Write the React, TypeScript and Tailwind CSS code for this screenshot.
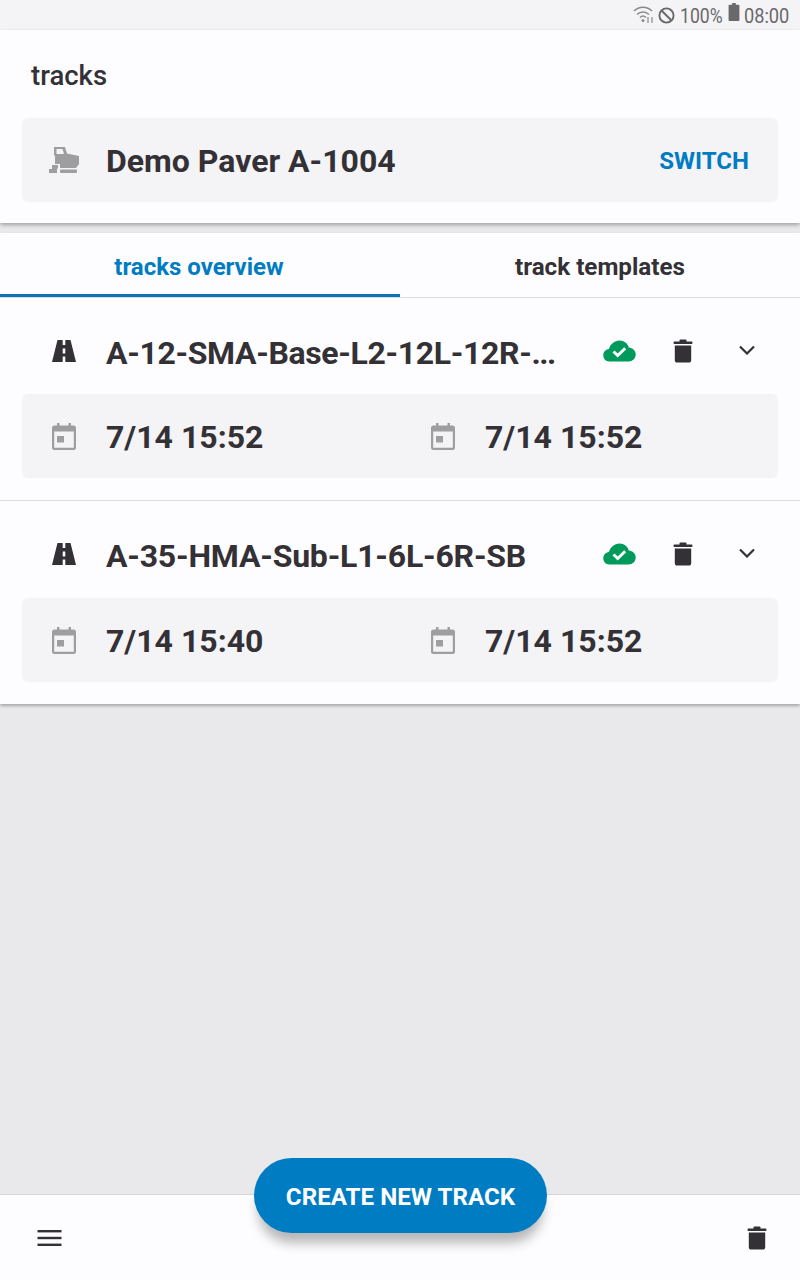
const font = { fontFamily: 'Roboto, sans-serif' };

function Trash({ className }: { className: string }) {
  return (
    <svg viewBox="0 0 20 24" className={className} fill="#333135">
      <rect x="0.5" y="2.5" width="19" height="2.6" rx="1" />
      <rect x="6.5" y="0.5" width="7" height="3" rx="1" />
      <path d="M1.8 6.5h16.4v14.5a2.6 2.6 0 0 1-2.6 2.6H4.4a2.6 2.6 0 0 1-2.6-2.6z" />
    </svg>
  );
}

function Calendar() {
  return (
    <svg viewBox="0 0 24 27" className="w-[24px] h-[27px] shrink-0" fill="#9e9da0">
      <path fillRule="evenodd" d="M5 0h2.500v2.500h9V0H19v2.500h2.500A2.500 2.500 0 0 1 24 5v19.500a2.500 2.500 0 0 1-2.500 2.500h-19A2.500 2.500 0 0 1 0 24.500V5a2.500 2.500 0 0 1 2.500-2.500H5zM2.200 8.500v16.300h19.600V8.500z" />
      <rect x="5" y="13" width="7" height="6.500" />
    </svg>
  );
}

function Road() {
  return (
    <svg viewBox="0 0 24 22" className="w-[24px] h-[22px] shrink-0" fill="#333135">
      <path fillRule="evenodd" d="M5.500 0h5.200v5h2.600V0h5.200L24 22H13.300v-5.500h-2.600V22H0zM10.700 8.500v5h2.600v-5z" />
    </svg>
  );
}

function Cloud() {
  return (
    <svg viewBox="0 0 33 22" className="w-[33px] h-[22px] shrink-0">
      <path fill="#009a5b" d="M16.500 0.500c4.600 0 8.300 3 9.300 7.100 3.900.2 6.900 3.200 6.900 6.900 0 3.900-3.200 7-7 7H6.300C2.900 21.500.300 18.700.300 15.300c0-3.200 2.400-5.800 5.600-6.200C7.400 4 11.500.500 16.500.500z" />
      <path d="M10.500 11.500l4.200 4 7.500-7.300" fill="none" stroke="#ffffff" strokeWidth="3" />
    </svg>
  );
}

function Chevron() {
  return (
    <svg viewBox="0 0 16 10" className="w-[16px] h-[10px]" fill="none" stroke="#333135" strokeWidth="2.200">
      <path d="M1 1.500l7 7 7-7" />
    </svg>
  );
}

function Paver() {
  return (
    <svg viewBox="0 0 30 26" className="w-[30px] h-[26px] shrink-0" fill="#9e9da0">
      <path fillRule="evenodd" d="M5 0h11l2 6.500L30 9v8l-3 4H11v-4H6V8.500H5zM7.500 2v5h7.500L13.500 2z" />
      <path d="M3 18h6v3.500H8V26H0v-4h3z" />
      <rect x="11" y="22.500" width="17" height="3.500" rx="1" />
    </svg>
  );
}

function TrackRow({ name, more, start, end, tall }: { name: string; more?: boolean; start: string; end: string; tall?: boolean }) {
  return (
    <div className="px-[22px]">
      <div className={tall ? 'h-[97px] flex items-center pt-[13px]' : 'h-[96px] flex items-center pt-[14px]'}>
        <div className="ml-[30px] -mt-[4px]"><Road /></div>
        <div className={more ? 'ml-[30px] w-[452px] whitespace-nowrap text-[32px] font-bold tracking-[-0.35px] text-[#333135] leading-[40px]' : 'ml-[30px] w-[452px] whitespace-nowrap text-[32px] font-bold tracking-[-0.2px] text-[#333135] leading-[40px]'}>
          {name}
          {more && <span className="tracking-[-1.500px]">...</span>}
        </div>
        <div className="ml-[45px] -mt-[4px]"><Cloud /></div>
        <div className="ml-[37px] -mt-[4px]"><Trash className="w-[20px] h-[24px]" /></div>
        <div className="ml-[46px] -mt-[6px]"><Chevron /></div>
      </div>
      <div className="h-[84px] bg-[#f4f3f5] rounded-[6px] flex items-center pl-[30px]">
        <div className="w-[379px] flex items-center gap-[30px]">
          <Calendar />
          <span className="pt-[2px] text-[32px] font-bold text-[#333135] leading-[40px]">{start}</span>
        </div>
        <div className="flex items-center gap-[30px]">
          <Calendar />
          <span className="pt-[2px] text-[32px] font-bold text-[#333135] leading-[40px]">{end}</span>
        </div>
      </div>
    </div>
  );
}

export default function App() {
  return (
    <div className="relative w-[800px] h-[1280px] bg-[#e9e8ea] flex flex-col overflow-hidden" style={font}>
      <div className="h-[30px] bg-[#f4f3f5] flex items-center justify-end pr-[11px] text-[#69686b] text-[20px] leading-[30px] pt-[2px]">
        <svg viewBox="0 0 24 20" className="w-[24px] h-[20px] -mt-[3px]" fill="none" stroke="#8a898c" strokeWidth="1.500">
          <path d="M1 6c5-5 13-5 18 0M4 9.500c3.500-3.500 8.500-3.500 12 0M7 12.500c2-2 4-2 6 0" />
          <circle cx="10" cy="15.500" r="1.500" fill="#8a898c" stroke="none" />
          <path d="M15 12v6M19 18v-6" strokeWidth="1.200" />
        </svg>
        <svg viewBox="0 0 18 18" className="w-[17px] h-[17px] ml-[1px] -mt-[2px]" fill="none" stroke="#69686b" strokeWidth="2">
          <circle cx="9" cy="9" r="7.500" />
          <path d="M3.700 3.700l10.600 10.600" />
        </svg>
        <span className="inline-block w-[42px] ml-[5px] scale-x-[0.88] origin-left whitespace-nowrap">100%</span>
        <svg viewBox="0 0 12 20" className="w-[12px] h-[18px] ml-[6px] -mt-[8px]" fill="#69686b">
          <path d="M4 0h4v2h3a1 1 0 0 1 1 1v16a1 1 0 0 1-1 1H1a1 1 0 0 1-1-1V3a1 1 0 0 1 1-1h3z" />
        </svg>
        <span className="inline-block w-[45px] ml-[4px] scale-x-[0.91] origin-left whitespace-nowrap">08:00</span>
      </div>

      <div className="h-[193px] bg-[#fdfcfe] shadow-[0_2px_4px_rgba(0,0,0,0.3)] px-[22px]">
        <div className="h-[88px] pl-[9px] pt-[28px] text-[27.500px] font-medium leading-[36px] text-[#333135]">tracks</div>
        <div className="h-[84px] bg-[#f4f3f5] rounded-[6px] flex items-center pl-[27px] pr-[29px]">
          <Paver />
          <span className="ml-[27px] pt-[1px] text-[32px] font-bold text-[#333135] leading-[40px]">Demo Paver A-1004</span>
          <span className="ml-auto pt-[1px] text-[24px] font-bold text-[#007cc3] leading-[32px]">SWITCH</span>
        </div>
      </div>

      <div className="mt-[10px] bg-[#fdfcfe] shadow-[0_2px_3px_rgba(0,0,0,0.28)]">
        <div className="h-[65px] flex border-b border-[#dcdbdd]">
          <div className="w-[400px] h-[64px] flex items-center justify-center pt-[6px] pr-[2px] text-[24px] font-bold text-[#007cc3] border-b-[3px] border-[#0e76b5]">tracks overview</div>
          <div className="w-[400px] flex items-center justify-center pt-[4px] text-[24.200px] font-bold text-[#333135]">track templates</div>
        </div>
        <div className="h-[203px] border-b border-[#dcdbdd]">
          <TrackRow name="A-12-SMA-Base-L2-12L-12R-" more start="7/14 15:52" end="7/14 15:52" />
        </div>
        <div className="h-[203px]">
          <TrackRow name="A-35-HMA-Sub-L1-6L-6R-SB" start="7/14 15:40" end="7/14 15:52" tall />
        </div>
      </div>

      <div className="flex-1" />

      <div className="h-[86px] bg-[#fdfcfe] border-t border-[#d6d5d8] flex items-center justify-between pl-[37px] pr-[33px] pt-[1px]">
        <svg viewBox="0 0 24 16" className="w-[25px] h-[16px]" fill="#333135">
          <rect width="24" height="2.400" />
          <rect y="6.800" width="24" height="2.400" />
          <rect y="13.600" width="24" height="2.400" />
        </svg>
        <Trash className="w-[20px] h-[24px]" />
      </div>

      <div className="absolute left-[254px] top-[1158px] w-[293px] h-[75px] pt-[3px] rounded-[38px] bg-[#007cc3] flex items-center justify-center text-white text-[24.200px] font-bold shadow-[0_14px_12px_-4px_rgba(0,0,0,0.28)]">
        CREATE NEW TRACK
      </div>
    </div>
  );
}
